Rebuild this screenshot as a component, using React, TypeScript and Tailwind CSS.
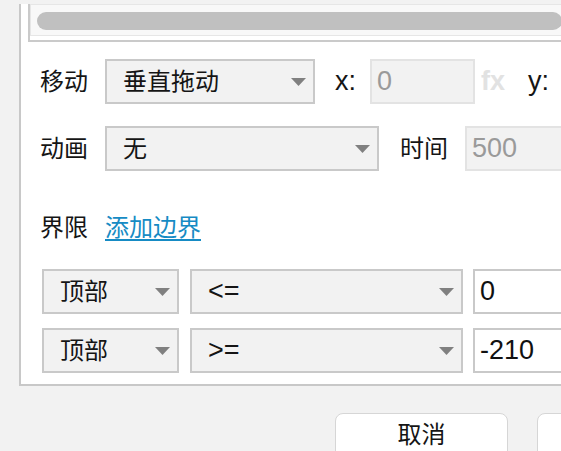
import React from 'react';

const font = { fontFamily: '"Liberation Sans", "Noto Sans CJK SC", sans-serif' };

function Arrow() {
  return (
    <svg width="15" height="8" viewBox="0 0 15 8" className="shrink-0">
      <path d="M0 0 H15 L7.5 8 Z" fill="#808080" />
    </svg>
  );
}

function Select({ value, latin, className }: { value: string; latin?: boolean; className: string }) {
  return (
    <div
      className={`flex h-[45px] items-center justify-between border-2 border-[#c9c9c9] bg-[#f2f2f2] pl-4 pr-[7px] ${className}`}
    >
      <span className={`${latin ? 'text-[27px]' : 'text-[24px]'} text-[#151515]`}>{value}</span>
      <Arrow />
    </div>
  );
}

function Field({ value, disabled, className }: { value: string; disabled?: boolean; className: string }) {
  return (
    <div
      className={`flex h-[45px] items-center border-2 pl-[5px] text-[27px] ${
        disabled ? 'border-[#e3e3e3] bg-[#f2f2f2] text-[#9a9a9a]' : 'border-[#c9c9c9] bg-white text-[#111]'
      } ${className}`}
    >
      {value}
    </div>
  );
}

export default function App() {
  return (
    <div className="h-[451px] w-[561px] overflow-hidden bg-[#f2f2f2]" style={font}>
      <div className="ml-[19px] w-[600px] border-b-2 border-l-2 border-[#c8c8c8] bg-white pb-[11px]">
        {/* scroll area left over from the table above */}
        <div className="ml-[7px] h-[38px] border-b-2 border-l-2 border-[#cacaca]">
          <div className="mt-[4px] h-[32px] border-l border-t border-b border-[#e6e6e6] bg-[#f8f8f8] pl-[6px] pt-[7px]">
            <div className="h-[18px] w-[525px] rounded-full bg-[#c0c0c0]" />
          </div>
        </div>

        <div className="pl-[19px] pt-[17px] text-[#151515]">
          <div className="flex items-center">
            <span className="w-[65px] text-[24px]">移动</span>
            <Select value="垂直拖动" className="w-[210px]" />
            <span className="ml-5 w-[35px] text-[27px]">x:</span>
            <Field value="0" disabled className="w-[105px]" />
            <span className="ml-[6px] text-[27px] font-bold text-[#e2e2e2]">fx</span>
            <span className="ml-[23px] text-[27px]">y:</span>
          </div>

          <div className="mt-[22px] flex items-center">
            <span className="w-[65px] text-[24px]">动画</span>
            <Select value="无" className="w-[274px]" />
            <span className="ml-[21px] w-[65px] text-[24px]">时间</span>
            <Field value="500" disabled className="w-[100px]" />
          </div>

          <div className="mt-[39px] flex items-center">
            <span className="w-[65px] text-[24px]">界限</span>
            <a className="text-[24px] text-[#168bc4] underline underline-offset-[3px]">添加边界</a>
          </div>

          <div className="mt-[23px] flex flex-col gap-[14px] pl-[2px]">
            {[
              ['顶部', '<=', '0'],
              ['顶部', '>=', '-210'],
            ].map(([side, op, num], i) => (
              <div key={i} className="flex items-center">
                <Select value={side} className="w-[137px]" />
                <Select value={op} latin className="ml-[11px] w-[273px]" />
                <Field value={num} className="ml-[10px] w-[110px]" />
              </div>
            ))}
          </div>
        </div>
      </div>

      <div className="mt-[27px] flex pl-[335px]">
        <button className="flex h-[50px] w-[173px] shrink-0 items-start justify-center rounded-lg border border-[#d6d6d6] bg-white pt-[3px] text-[24px] text-[#151515]">
          取消
        </button>
        <button className="ml-[29px] h-[50px] w-[100px] shrink-0 rounded-lg border border-[#d6d6d6] bg-white" />
      </div>
    </div>
  );
}
